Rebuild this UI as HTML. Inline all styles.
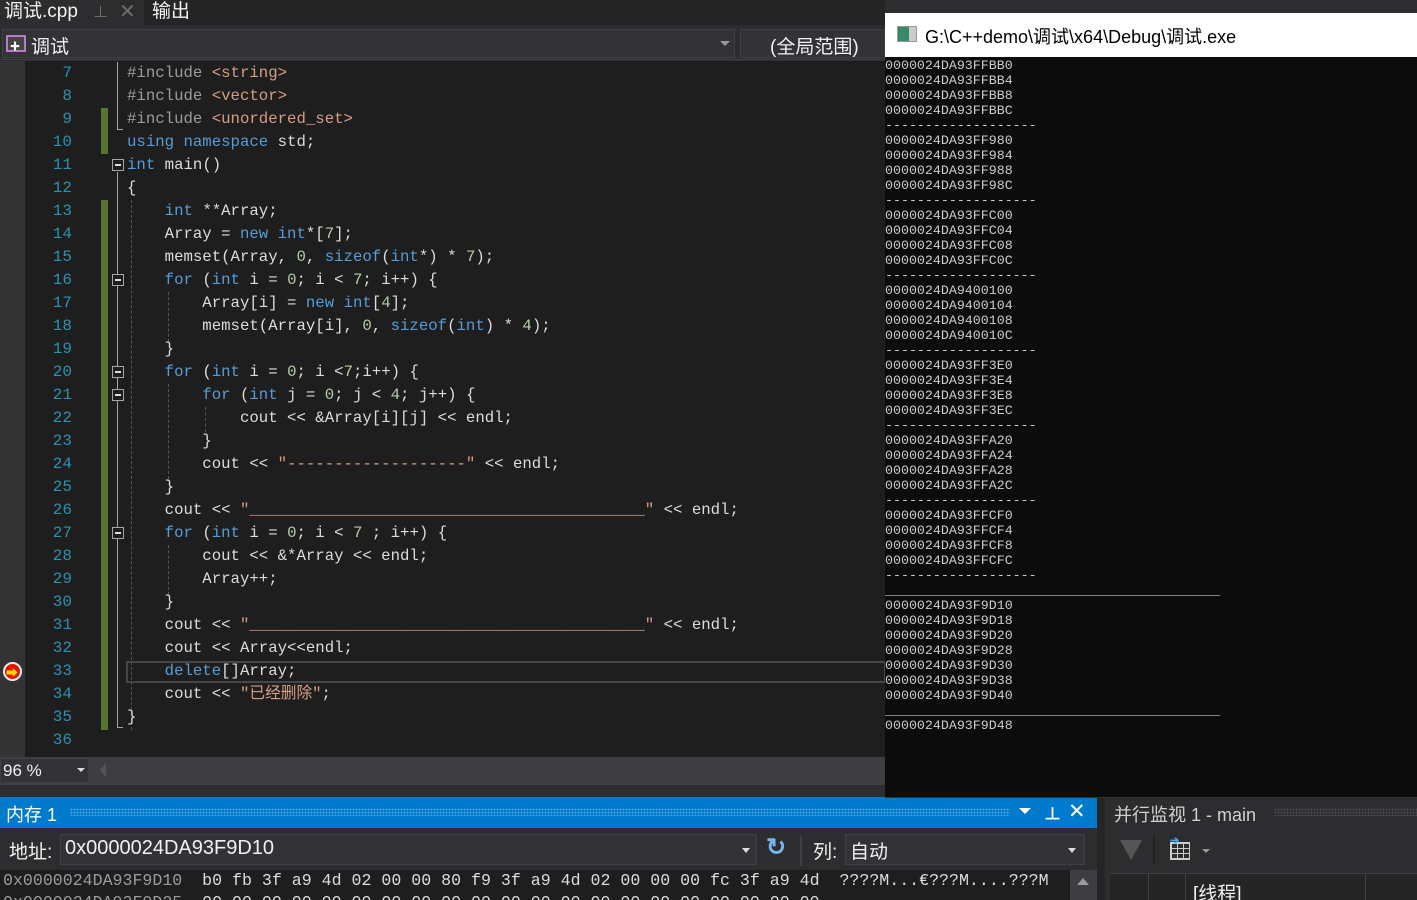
<!DOCTYPE html>
<html><head><meta charset="utf-8"><style>
*{margin:0;padding:0;box-sizing:border-box}
html{width:1417px;height:900px;overflow:hidden}
body{width:1417px;height:900px;overflow:hidden;background:#2d2d30;position:relative;font-family:"Liberation Sans","Noto Sans CJK SC",sans-serif;color:#f1f1f1}
.abs{position:absolute}
.mono{font-family:"Liberation Mono","Noto Sans CJK SC",monospace}
.code{position:absolute;left:127px;top:62px;font-size:15.7px;line-height:23px;color:#dcdcdc;white-space:pre;font-family:"Liberation Mono","Noto Sans CJK SC",monospace}
.k{color:#569cd6}.s{color:#d69d85}.n{color:#b5cea8}.p{color:#9b9b9b}
.ln{position:absolute;left:25px;width:47px;top:62px;text-align:right;font-size:16px;line-height:23px;color:#2b91af;font-family:"Liberation Mono",monospace}
.fold{position:absolute;left:112px;width:12px;height:12px;border:1px solid #a5a5a5;background:#1e1e1e}
.fold:after{content:"";position:absolute;left:2px;top:4px;width:6px;height:1.5px;background:#ddd}
.con{position:absolute;left:885px;top:58px;font-size:13.3px;line-height:15px;color:#cccccc;white-space:pre;font-family:"Liberation Mono",monospace}
</style></head><body>
<div class="abs" style="left:0;top:0;width:885px;height:25px;background:#2d2d30"></div>
<div class="abs" style="left:4px;top:0;font-size:19px;line-height:24px;color:#f1f1f1">调试.cpp</div>
<div class="abs" style="left:93px;top:1px;font-size:15px;color:#6d6d6d">⊥</div>
<div class="abs" style="left:119px;top:-1px;font-size:20px;color:#6d6d6d">✕</div>
<div class="abs" style="left:144px;top:0;width:741px;height:25px;background:#252526"></div>
<div class="abs" style="left:152px;top:0;font-size:19px;line-height:24px;color:#f1f1f1">输出</div>
<div class="abs" style="left:0;top:26px;width:885px;height:34px;background:#2d2d30;border-bottom:1px solid #3f3f46"></div>
<div class="abs" style="left:2px;top:29px;width:733px;height:29px;background:#333337;border:1px solid #3f3f46"></div>
<div class="abs" style="left:6px;top:35px;width:20px;height:17px;border:2px solid #b180c4;background:#444"></div>
<div class="abs" style="left:10px;top:38px;font-size:10px;color:#fff">✚</div>
<div class="abs" style="left:31px;top:32px;font-size:19px;color:#f1f1f1">调试</div>
<div class="abs" style="left:720px;top:41px;width:0;height:0;border-left:5px solid transparent;border-right:5px solid transparent;border-top:5px solid #999"></div>
<div class="abs" style="left:740px;top:29px;width:145px;height:29px;background:#333337;border:1px solid #3f3f46"></div>
<div class="abs" style="left:770px;top:32px;font-size:19px;color:#f1f1f1">(全局范围)</div>
<div class="abs" style="left:0;top:61px;width:885px;height:696px;background:#1e1e1e"></div>
<div class="abs" style="left:0;top:61px;width:25px;height:696px;background:#333333"></div>
<div class="abs" style="left:101px;top:108px;width:7px;height:46px;background:#577430"></div>
<div class="abs" style="left:101px;top:200px;width:7px;height:530px;background:#577430"></div>
<div class="abs" style="left:117px;top:62px;width:1px;height:68px;background:#a5a5a5"></div>
<div class="abs" style="left:117px;top:129px;width:6px;height:1px;background:#a5a5a5"></div>
<div class="abs" style="left:117px;top:172px;width:1px;height:555px;background:#a5a5a5"></div>
<div class="abs" style="left:117px;top:727px;width:6px;height:1px;background:#a5a5a5"></div>
<div class="abs" style="left:131px;top:200px;width:0;height:530px;border-left:1px dashed #555"></div>
<div class="abs" style="left:168px;top:292px;width:0;height:50px;border-left:1px dashed #555"></div>
<div class="abs" style="left:168px;top:384px;width:0;height:95px;border-left:1px dashed #555"></div>
<div class="abs" style="left:205px;top:407px;width:0;height:25px;border-left:1px dashed #555"></div>
<div class="abs" style="left:168px;top:545px;width:0;height:50px;border-left:1px dashed #555"></div>
<div class="fold" style="top:159px"></div>
<div class="fold" style="top:274px"></div>
<div class="fold" style="top:366px"></div>
<div class="fold" style="top:389px"></div>
<div class="fold" style="top:527px"></div>
<div class="abs" style="left:126px;top:661px;width:760px;height:22px;border:2px solid #464646"></div>
<div class="abs" style="left:3px;top:662px;width:19px;height:19px;border-radius:50%;background:#e51400;border:2px solid #eee"></div>
<div class="abs" style="left:6px;top:664px;font-size:12px;color:#ffd800">➡</div>
<div class="ln">7<br>8<br>9<br>10<br>11<br>12<br>13<br>14<br>15<br>16<br>17<br>18<br>19<br>20<br>21<br>22<br>23<br>24<br>25<br>26<br>27<br>28<br>29<br>30<br>31<br>32<br>33<br>34<br>35<br>36</div>
<div class="code"><span class="p">#include</span> <span class="s">&lt;string&gt;</span>
<span class="p">#include</span> <span class="s">&lt;vector&gt;</span>
<span class="p">#include</span> <span class="s">&lt;unordered_set&gt;</span>
<span class="k">using namespace</span> std;
<span class="k">int</span> main()
{
    <span class="k">int</span> **Array;
    Array = <span class="k">new int</span>*[<span class="n">7</span>];
    memset(Array, <span class="n">0</span>, <span class="k">sizeof</span>(<span class="k">int</span>*) * <span class="n">7</span>);
    <span class="k">for</span> (<span class="k">int</span> i = <span class="n">0</span>; i &lt; <span class="n">7</span>; i++) {
        Array[i] = <span class="k">new int</span>[<span class="n">4</span>];
        memset(Array[i], <span class="n">0</span>, <span class="k">sizeof</span>(<span class="k">int</span>) * <span class="n">4</span>);
    }
    <span class="k">for</span> (<span class="k">int</span> i = <span class="n">0</span>; i &lt;<span class="n">7</span>;i++) {
        <span class="k">for</span> (<span class="k">int</span> j = <span class="n">0</span>; j &lt; <span class="n">4</span>; j++) {
            cout &lt;&lt; &amp;Array[i][j] &lt;&lt; endl;
        }
        cout &lt;&lt; <span class="s">"-------------------"</span> &lt;&lt; endl;
    }
    cout &lt;&lt; <span class="s">"__________________________________________"</span> &lt;&lt; endl;
    <span class="k">for</span> (<span class="k">int</span> i = <span class="n">0</span>; i &lt; <span class="n">7</span> ; i++) {
        cout &lt;&lt; &amp;*Array &lt;&lt; endl;
        Array++;
    }
    cout &lt;&lt; <span class="s">"__________________________________________"</span> &lt;&lt; endl;
    cout &lt;&lt; Array&lt;&lt;endl;
    <span class="k">delete</span>[]Array;
    cout &lt;&lt; <span class="s">"已经删除"</span>;
}</div>
<div class="abs" style="left:0;top:757px;width:885px;height:28px;background:#3e3e42"></div>
<div class="abs" style="left:0;top:758px;width:89px;height:25px;background:#333337;border:1px solid #3f3f46"></div>
<div class="abs" style="left:3px;top:761px;font-size:17px;color:#f1f1f1">96 %</div>
<div class="abs" style="left:77px;top:768px;border-left:4px solid transparent;border-right:4px solid transparent;border-top:4px solid #ddd"></div>
<div class="abs" style="left:100px;top:763px;border-top:7px solid transparent;border-bottom:7px solid transparent;border-right:6px solid #555"></div>
<div class="abs" style="left:0;top:797px;width:1097px;height:31px;background:#007acc"></div>
<div class="abs" style="left:6px;top:801px;font-size:18px;color:#fff">内存 1</div>
<div class="abs" style="left:70px;top:808px;width:940px;height:8px;background-image:radial-gradient(#4aa3dd 0.8px,transparent 0.9px);background-size:3px 3px"></div>
<div class="abs" style="left:1019px;top:808px;border-left:6px solid transparent;border-right:6px solid transparent;border-top:6px solid #fff"></div>
<div class="abs" style="left:1044px;top:800px;font-size:17px;color:#fff;font-weight:bold">⊥</div>
<div class="abs" style="left:1068px;top:799px;font-size:21px;color:#fff">✕</div>
<div class="abs" style="left:0;top:828px;width:1097px;height:42px;background:#2d2d30"></div>
<div class="abs" style="left:9px;top:837px;font-size:19px;color:#f1f1f1">地址:</div>
<div class="abs" style="left:60px;top:834px;width:697px;height:31px;background:#333337;border:1px solid #3f3f46"></div>
<div class="abs" style="left:65px;top:837px;font-size:20px;color:#f1f1f1">0x0000024DA93F9D10</div>
<div class="abs" style="left:742px;top:848px;border-left:4px solid transparent;border-right:4px solid transparent;border-top:5px solid #ddd"></div>
<div class="abs" style="left:766px;top:833px;font-size:24px;color:#75b8ee;font-weight:bold">↻</div>
<div class="abs" style="left:800px;top:836px;width:2px;height:30px;background:#3f3f46"></div>
<div class="abs" style="left:813px;top:837px;font-size:19px;color:#f1f1f1">列:</div>
<div class="abs" style="left:845px;top:834px;width:240px;height:31px;background:#333337;border:1px solid #3f3f46"></div>
<div class="abs" style="left:850px;top:837px;font-size:19px;color:#f1f1f1">自动</div>
<div class="abs" style="left:1068px;top:848px;border-left:4px solid transparent;border-right:4px solid transparent;border-top:5px solid #ddd"></div>
<div class="abs" style="left:0;top:870px;width:1070px;height:30px;background:#1e1e1e;overflow:hidden">
<div class="abs mono" style="left:3px;top:0;font-size:16.6px;line-height:22px;white-space:pre;color:#dcdcdc"><span style="color:#9b9b9b">0x0000024DA93F9D10</span>  b0 fb 3f a9 4d 02 00 00 80 f9 3f a9 4d 02 00 00 00 fc 3f a9 4d  ????M...€???M....???M
<span style="color:#9b9b9b">0x0000024DA93F9D25</span>  00 00 00 00 00 00 00 00 00 00 00 00 00 00 00 00 00 00 00 00 00  .....................</div></div>
<div class="abs" style="left:1070px;top:870px;width:27px;height:30px;background:#3e3e42"></div>
<div class="abs" style="left:1077px;top:878px;border-left:6px solid transparent;border-right:6px solid transparent;border-bottom:7px solid #999"></div>
<div class="abs" style="left:1097px;top:797px;width:320px;height:103px;background:#2d2d30;border-left:8px solid #252526"></div>
<div class="abs" style="left:1114px;top:801px;font-size:18px;color:#d0d0d0">并行监视 1 - main</div>
<div class="abs" style="left:1274px;top:808px;width:143px;height:8px;background-image:radial-gradient(#4a4a4e 0.8px,transparent 0.9px);background-size:3px 3px"></div>
<div class="abs" style="left:1120px;top:840px;border-left:11px solid transparent;border-right:11px solid transparent;border-top:20px solid #555"></div>
<div class="abs" style="left:1153px;top:835px;width:2px;height:30px;background:#222"></div>
<div class="abs" style="left:1170px;top:842px;width:20px;height:18px;border:1px solid #ccc;background:repeating-linear-gradient(90deg,#ccc 0 1px,transparent 1px 6px),repeating-linear-gradient(0deg,#ccc 0 1px,transparent 1px 5px)"></div>
<div class="abs" style="left:1170px;top:834px;font-size:11px;color:#3ea3f0;font-weight:bold">➔</div>
<div class="abs" style="left:1202px;top:849px;border-left:4px solid transparent;border-right:4px solid transparent;border-top:4px solid #999"></div>
<div class="abs" style="left:1110px;top:873px;width:307px;height:27px;background:#252526;border-top:1px solid #3f3f46"></div>
<div class="abs" style="left:1148px;top:874px;width:1px;height:26px;background:#3f3f46"></div>
<div class="abs" style="left:1185px;top:874px;width:1px;height:26px;background:#3f3f46"></div>
<div class="abs" style="left:1365px;top:874px;width:1px;height:26px;background:#3f3f46"></div>
<div class="abs" style="left:1193px;top:879px;font-size:19px;color:#f1f1f1">[线程]</div>
<div class="abs" style="left:885px;top:13px;width:532px;height:785px;background:#0c0c0c;border-bottom:1px solid #333"></div>
<div class="abs" style="left:885px;top:13px;width:532px;height:44px;background:#fff"></div>
<div class="abs" style="left:897px;top:26px;width:20px;height:16px;border:1px solid #999;background:linear-gradient(90deg,#3a8a6a 0 60%,#ccc 60%)"></div>
<div class="abs" style="left:925px;top:23px;font-size:18px;color:#000">G:\C++demo\调试\x64\Debug\调试.exe</div>
<div class="con">0000024DA93FFBB0
0000024DA93FFBB4
0000024DA93FFBB8
0000024DA93FFBBC
-------------------
0000024DA93FF980
0000024DA93FF984
0000024DA93FF988
0000024DA93FF98C
-------------------
0000024DA93FFC00
0000024DA93FFC04
0000024DA93FFC08
0000024DA93FFC0C
-------------------
0000024DA9400100
0000024DA9400104
0000024DA9400108
0000024DA940010C
-------------------
0000024DA93FF3E0
0000024DA93FF3E4
0000024DA93FF3E8
0000024DA93FF3EC
-------------------
0000024DA93FFA20
0000024DA93FFA24
0000024DA93FFA28
0000024DA93FFA2C
-------------------
0000024DA93FFCF0
0000024DA93FFCF4
0000024DA93FFCF8
0000024DA93FFCFC
-------------------
__________________________________________
0000024DA93F9D10
0000024DA93F9D18
0000024DA93F9D20
0000024DA93F9D28
0000024DA93F9D30
0000024DA93F9D38
0000024DA93F9D40
__________________________________________
0000024DA93F9D48</div>
</body></html>
